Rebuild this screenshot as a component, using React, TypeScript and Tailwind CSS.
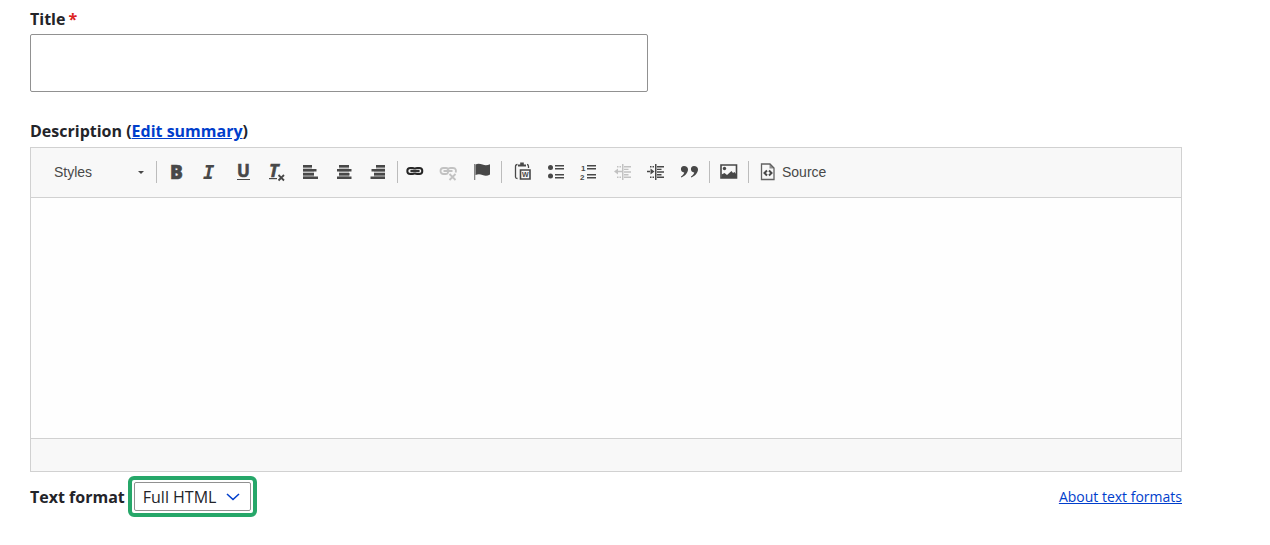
import type { ReactNode } from "react";

type Tool = {
  label: string;
  icon: ReactNode;
  disabled?: boolean;
};

const sans = "font-['Open_Sans','Noto_Sans',sans-serif]";
const toolbarSans = "font-['Liberation_Sans',Arial,sans-serif]";

const basicTools: Tool[] = [
  {
    label: "Bold",
    icon: (
      <text x="4" y="17" fontSize="19" fontWeight="800" stroke="currentColor" strokeWidth=".6">
        B
      </text>
    ),
  },
  {
    label: "Italic",
    icon: (
      <text
        x="3"
        y="17"
        fontSize="19"
        fontWeight="700"
        fontStyle="italic"
        className="font-['DejaVu_Sans_Mono',monospace]"
      >
        I
      </text>
    ),
  },
  {
    label: "Underline",
    icon: (
      <>
        <text x="4" y="15" fontSize="17" fontWeight="700" stroke="currentColor" strokeWidth=".6">
          U
        </text>
        <path d="M4 17h13v1H4z" />
      </>
    ),
  },
  {
    label: "Remove Format",
    icon: (
      <>
        <text
          x="2"
          y="15"
          fontSize="18"
          fontWeight="700"
          fontStyle="italic"
          stroke="currentColor"
          strokeWidth=".6"
        >
          T
        </text>
        <path d="M2 16h8v1.2H2z" />
        <path d="M11.5 13l5.5 5.5M17 13l-5.5 5.5" fill="none" stroke="currentColor" strokeWidth="1.8" />
      </>
    ),
  },
  {
    label: "Align Left",
    icon: (
      <>
        <path d="M2 3h9v2.5H2zM2 7h13.5v2.5H2zM2 11h11v2.5H2zM2 14.5h15V17H2z" />
        <path d="M2 5h9v2H2zM2 9h11v2H2zM2 13h11v2H2z" opacity=".3" />
      </>
    ),
  },
  {
    label: "Center",
    icon: (
      <>
        <path d="M5 3h10v2.5H5zM3 7h14.5v2.5H3zM5 11h10.5v2.5H5zM3 14.5h14.5V17H3z" />
        <path d="M5 5h10v2H5zM5 9h10v2H5zM5 13h10v2H5z" opacity=".3" />
      </>
    ),
  },
  {
    label: "Align Right",
    icon: (
      <>
        <path d="M8 3h9v2.5H8zM3.5 7H17v2.5H3.5zM6 11h11v2.5H6zM2.5 14.5H17V17H2.5z" />
        <path d="M8 5h9v2H8zM6 9h11v2H6zM6 13h11v2H6z" opacity=".3" />
      </>
    ),
  },
];

const linkTools: Tool[] = [
  {
    label: "Link",
    icon: (
      <g fill="none" stroke="#262626">
        <rect x="2.3" y="6" width="8" height="6" rx="3" strokeWidth="2" />
        <rect x="9.3" y="6" width="8" height="6" rx="3" strokeWidth="2" />
        <path d="M5.5 9h9" stroke="#b5b5b5" strokeWidth="3.4" />
        <path d="M5.5 9h9" strokeWidth="1.8" />
      </g>
    ),
  },
  {
    label: "Unlink",
    disabled: true,
    icon: (
      <g fill="none" stroke="currentColor" strokeWidth="1.8">
        <path d="M10 11c-.5.7-1.3 1-2 1H5.5c-4 0-4-6 0-6H8c.7 0 1.5.3 2 1" />
        <path d="M10.5 11c-2-2-.5-5 2-5H15c3 0 3.5 3 2.5 4.5M5.5 9h9" />
        <path d="M11.5 12l6 6M17.5 12l-6 6" />
      </g>
    ),
  },
  {
    label: "Anchor",
    icon: (
      <>
        <path d="M2 2h1.3v16H2z" opacity=".65" />
        <path d="M3.500 2.500c2-1.300 4.500-1 7 0 2.500 1.200 5 1 7.500-.3v10.300c-2.500 1.500-5 1.500-7.500.5-2.500-1.200-5-1-7 0z" />
      </>
    ),
  },
];

const blockTools: Tool[] = [
  {
    label: "Paste from Word",
    icon: (
      <>
        <path
          d="M4.500 2.500q-2 0-2 2v10.500q0 1.500 2 1.500M14 2.500q1.500 0 1.500 2V6"
          fill="none"
          stroke="currentColor"
          strokeWidth="1.3"
        />
        <path d="M5 2.500h2.200V.5h3.600v2H13v2H5z" />
        <path d="M7.500 8h9.500v9H7.500z" fill="none" stroke="currentColor" strokeWidth="1.6" />
        <text x="9" y="15" fontSize="7" fontWeight="700" className={toolbarSans}>
          W
        </text>
      </>
    ),
  },
  {
    label: "Bulleted List",
    icon: (
      <>
        <circle cx="4.500" cy="5.500" r="2.500" />
        <circle cx="4.500" cy="14" r="2.500" />
        <path d="M9 3h9v1.500H9zM9 6h9v1.500H9zM9 12h9v1.500H9zM9 15h9v1.500H9z" />
      </>
    ),
  },
  {
    label: "Numbered List",
    icon: (
      <>
        <text x="2" y="9" fontSize="8" fontWeight="700" className={toolbarSans}>
          1
        </text>
        <text x="1" y="18" fontSize="8" fontWeight="700" className={toolbarSans}>
          2
        </text>
        <path d="M8 3h9v1.500H8zM8 6h9v1.500H8zM8 12h9v1.500H8zM8 15h9v1.500H8z" />
      </>
    ),
  },
  {
    label: "Decrease Indent",
    disabled: true,
    icon: (
      <>
        <path d="M9 2h1.500v16H9zM11 4h7v1.400h-7zM11 6.700h4.500v1.400H11zM11 9.300h7v1.400h-7zM11 12h4.500v1.400H11zM11 14.600h7V16h-7z" />
        <path d="M5 6.500v6L1 9.500zM5 8.800h4v1.500H5zM4 4h1.500v1.400H4zM6.500 4H8v1.400H6.500zM4 14.500h1.500V16H4zM6.500 14.500H8V16H6.500z" />
      </>
    ),
  },
  {
    label: "Increase Indent",
    icon: (
      <>
        <path d="M9 2h1.500v16H9zM11 4h7v1.400h-7zM11 6.700h4.500v1.400H11zM11 9.300h7v1.400h-7zM11 12h4.500v1.400H11zM11 14.600h7V16h-7z" />
        <path d="M4.500 6.500v6l4-3zM1 8.800h4v1.500H1zM4 4h1.500v1.400H4zM6.500 4H8v1.400H6.500zM4 14.500h1.500V16H4zM6.500 14.500H8V16H6.500z" />
      </>
    ),
  },
  {
    label: "Block Quote",
    icon: (
      <>
        <path d="M5 4a3.2 3.2 0 1 0 .3 6.400c-.5 1.800-1.800 3-3.300 4v1C5.500 14.500 9 11 9 7.500 9 5.300 7.500 4 5 4z" />
        <path d="M15 4a3.2 3.2 0 1 0 .3 6.400c-.5 1.800-1.800 3-3.300 4v1c3.500-.9 7-4.400 7-7.900C19 5.300 17.500 4 15 4z" />
      </>
    ),
  },
];

const mediaTools: Tool[] = [
  {
    label: "Image",
    icon: (
      <>
        <path d="M2 3h15.500v13H2z" fill="none" stroke="currentColor" strokeWidth="1.6" />
        <circle cx="5.500" cy="6.500" r="1.700" />
        <path d="M2.500 16v-3.500L5.500 11l2.500 2 4.500-4 1.500 2 1.500-1 2 2.500V16z" />
      </>
    ),
  },
];

function Icon({ children }: { children: ReactNode }) {
  return (
    <svg
      viewBox="0 0 20 20"
      className={`size-5 shrink-0 overflow-visible ${sans}`}
      fill="currentColor"
      aria-hidden="true"
    >
      {children}
    </svg>
  );
}

function ToolGroup({ tools, className }: { tools: Tool[]; className: string }) {
  return (
    <div className={`grid auto-cols-fr grid-flow-col ${className}`}>
      {tools.map((tool) => (
        <button
          key={tool.label}
          type="button"
          aria-label={tool.label}
          disabled={tool.disabled}
          className="flex items-center justify-center disabled:opacity-30"
        >
          <Icon>{tool.icon}</Icon>
        </button>
      ))}
    </div>
  );
}

function Separator() {
  return <span className="h-[22px] w-px shrink-0 bg-[#bcbcbc]" />;
}

function Toolbar() {
  return (
    <div
      className={`flex items-center border-b border-[#d1d1d1] bg-[#f8f8f8] pt-[13px] pb-[14px] pl-[23px] text-sm leading-5 text-[#484848] ${toolbarSans}`}
    >
      <button type="button" className="mr-3 flex w-[90px] items-center justify-between">
        Styles
        <svg viewBox="0 0 6 3" className="h-[3px] w-[6px]" fill="currentColor" aria-hidden="true">
          <path d="M0 0h6L3 3z" />
        </svg>
      </button>
      <Separator />
      <ToolGroup tools={basicTools} className="mr-[2px] ml-[2px] w-[236px]" />
      <Separator />
      <ToolGroup tools={linkTools} className="mr-[2px] w-[101px]" />
      <Separator />
      <ToolGroup tools={blockTools} className="mr-[3px] ml-1 w-[200px]" />
      <Separator />
      <ToolGroup tools={mediaTools} className="mr-[2px] ml-[2px] w-[34px]" />
      <Separator />
      <button type="button" className="ml-[9px] flex items-center gap-1">
        <Icon>
          <path d="M3.500 2H12l4 4v11.500H3.500z" fill="none" stroke="currentColor" strokeWidth="1.3" opacity=".85" />
          <path d="M11.500 2v4.500H16z" opacity=".6" />
          <path
            d="M9 8.500L6.500 11 9 13.500M11 8.500l2.500 2.500-2.500 2.500"
            fill="none"
            stroke="currentColor"
            strokeWidth="2"
          />
        </Icon>
        Source
      </button>
    </div>
  );
}

export default function App() {
  return (
    <form className={`bg-white pt-[7px] pr-[88px] pb-7 pl-[30px] text-base leading-6 text-[#232429] ${sans}`}>
      <div>
        <label htmlFor="title" className="flex gap-[3px] font-bold">
          Title
          <span className="text-[#dc2323]">*</span>
        </label>
        <input
          id="title"
          type="text"
          required
          className="mt-[3px] block h-[58px] w-full max-w-[618px] rounded-xs border border-[#919191] px-4 outline-none"
        />
      </div>

      <div className="mt-[27px]">
        <label htmlFor="description" className="font-bold">
          Description (
          <a href="#summary" className="text-[#003ecc] underline">
            Edit summary
          </a>
          )
        </label>
        <div className="mt-1 border border-[#d1d1d1]">
          <Toolbar />
          <textarea
            id="description"
            className="block h-60 w-full resize-none bg-[#fefefe] p-5 outline-none"
          />
          <div className="h-[33px] border-t border-[#d1d1d1] bg-[#f8f8f8]" />
        </div>
      </div>

      <div className="mt-1 flex items-center justify-between">
        <div className="flex items-center gap-[3px]">
          <label htmlFor="format" className="font-bold">
            Text format
          </label>
          <div className="relative rounded-[6px] border-4 border-[#26a769] p-[2px]">
            <select
              id="format"
              defaultValue="full"
              className="block h-[29px] w-[117px] appearance-none rounded-xs border border-[#919191] bg-white pl-2 outline-none"
            >
              <option value="full">Full HTML</option>
            </select>
            <svg
              viewBox="0 0 14 8"
              className="pointer-events-none absolute top-[13px] right-[13px] h-[8px] w-[14px]"
              fill="none"
              stroke="#003ecc"
              strokeWidth="1.6"
              aria-hidden="true"
            >
              <path d="M1 1l6 5.500L13 1" />
            </svg>
          </div>
        </div>
        <a href="#formats" className="text-sm text-[#003ecc] underline">
          About text formats
        </a>
      </div>
    </form>
  );
}
